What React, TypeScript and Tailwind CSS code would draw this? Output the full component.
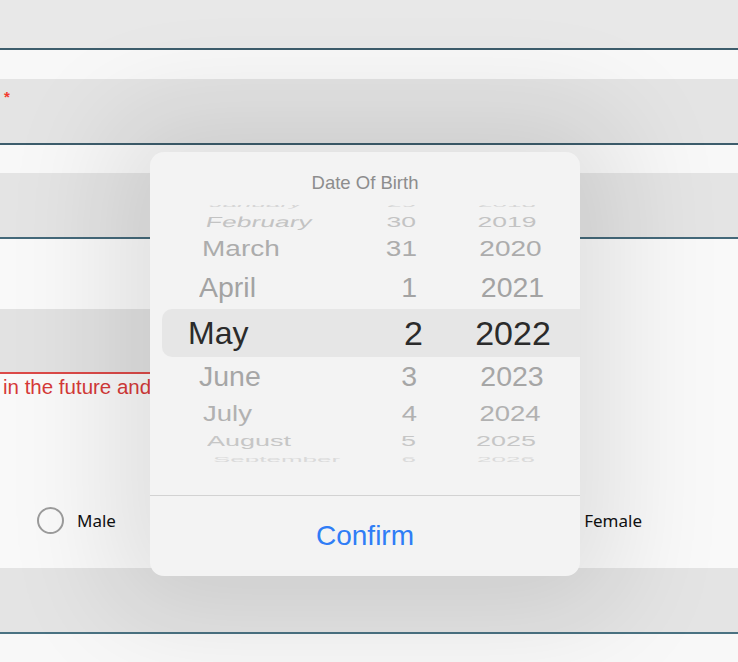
import React from "react";

type Row = {
  m: string;
  d: string;
  y: string;
  row: string;
  mc: string;
  dc: string;
  yc: string;
  t: string;
  mt?: string;
};

const rows: Row[] = [
  { m: "January", d: "29", y: "2018", row: "h-[9px]", mc: "w-[200px] pl-[60px]", dc: "w-[67px] pr-[1px]", yc: "w-[186px] pr-[6px]", t: "text-[26px] scale-y-[0.3] text-[#d6d6d6] -translate-y-[4px]", mt: "-skew-x-[10deg]" },
  { m: "February", d: "30", y: "2019", row: "h-[18px]", mc: "w-[200px] pl-[56px]", dc: "w-[67px] pr-[1px]", yc: "w-[186px] pr-[6px]", t: "text-[26.5px] scale-y-[0.55] text-[#c3c3c3]", mt: "-skew-x-[8deg]" },
  { m: "March", d: "31", y: "2020", row: "h-[36px]", mc: "w-[200px] pl-[52px]", dc: "w-[67px]", yc: "w-[186px] pl-[1px]", t: "text-[28px] scale-y-[0.8] text-[#acacac]" },
  { m: "April", d: "1", y: "2021", row: "h-[41px]", mc: "w-[200px] pl-[49px]", dc: "w-[67px]", yc: "w-[186px] pl-[5px]", t: "text-[28.5px] scale-y-[0.97] text-[#a3a3a3]" },
];

const rowsBelow: Row[] = [
  { m: "June", d: "3", y: "2023", row: "h-[41px]", mc: "w-[200px] pl-[49px]", dc: "w-[67px]", yc: "w-[186px] pl-[4px]", t: "text-[28.5px] scale-y-[0.96] text-[#a6a6a6]" },
  { m: "July", d: "4", y: "2024", row: "h-[34px]", mc: "w-[200px] pl-[53px]", dc: "w-[67px]", yc: "w-[186px]", t: "text-[27.5px] scale-y-[0.77] text-[#b1b1b1]" },
  { m: "August", d: "5", y: "2025", row: "h-[20px]", mc: "w-[200px] pl-[57px]", dc: "w-[67px] pr-[1px]", yc: "w-[186px] pr-[8px]", t: "text-[27px] scale-y-[0.55] text-[#c6c6c6]" },
  { m: "September", d: "6", y: "2026", row: "h-[10px]", mc: "w-[200px] pl-[63px]", dc: "w-[67px] pr-[1px]", yc: "w-[186px] pr-[8px]", t: "text-[26px] scale-y-[0.28] text-[#dadada] translate-y-[3px]" },
];

function WheelRow({ r }: { r: Row }) {
  return (
    <div className={`flex shrink-0 items-center ${r.row}`}>
      <div className={`shrink-0 ${r.mc}`}>
        <span className={`inline-block leading-none ${r.t} ${r.mt ?? ""}`}>{r.m}</span>
      </div>
      <div className={`shrink-0 text-right ${r.dc}`}>
        <span className={`inline-block leading-none ${r.t}`}>{r.d}</span>
      </div>
      <div className={`shrink-0 text-center ${r.yc}`}>
        <span className={`inline-block leading-none ${r.t}`}>{r.y}</span>
      </div>
    </div>
  );
}

export default function App() {
  return (
    <div className="relative h-[662px] w-[738px] overflow-hidden bg-[#f8f8f8] font-['Liberation_Sans',Arial,sans-serif]">
      {/* background form */}
      <div className="flex flex-col">
        <div className="h-[48px] bg-[#e8e8e8]" />
        <div className="h-[2px] bg-[#3d5d6c]" />
        <div className="h-[29px] bg-[#f8f8f8]" />
        <div className="h-[64px] bg-[#e4e4e4] pl-[4px] pt-[6px]">
          <span className="text-[15px] font-bold leading-none text-[#f23b30]">*</span>
        </div>
        <div className="h-[2px] bg-[#3d5d6c]" />
        <div className="h-[28px] bg-[#f8f8f8]" />
        <div className="h-[64px] bg-[#e4e4e4]" />
        <div className="h-[2px] bg-[#44697a]" />
        <div className="flex">
          <div className="flex w-[360px] flex-col">
            <div className="h-[70px] bg-[#f9f9f9]" />
            <div className="h-[63px] bg-[#e2e2e2]" />
            <div className="h-[2px] bg-[#dc4a48]" />
          </div>
          <div className="flex-1 bg-[#f9f9f9]" />
        </div>
        <div className="flex h-[194px] flex-col bg-[#f9f9f9]">
          <div className="whitespace-nowrap pl-[3px] pt-[1px] text-[20.5px] leading-[24px] text-[#d63a38]">
            in the future and
          </div>
          <div className="mt-[108px] flex items-center justify-between pl-[37px] pr-[96px] font-['Noto_Sans',sans-serif] text-[17px] text-[#111]">
            <div className="flex items-center gap-[13px]">
              <span className="h-[27px] w-[27px] rounded-full border-[2.5px] border-[#9c9c9c]" />
              <span>Male</span>
            </div>
            <div className="flex items-center gap-[13px]">
              <span className="h-[27px] w-[27px] rounded-full border-[2.5px] border-[#9c9c9c]" />
              <span>Female</span>
            </div>
          </div>
        </div>
        <div className="h-[64px] bg-[#e4e4e4]" />
        <div className="h-[2px] bg-[#4a7282]" />
        <div className="h-[28px] bg-[#f8f8f8]" />
      </div>

      {/* modal */}
      <div className="absolute left-[150px] top-[152px] flex h-[424px] w-[430px] flex-col overflow-hidden rounded-[14px] bg-[#f3f3f3] shadow-[0_0_110px_40px_rgba(0,0,0,0.1)]">
        <div className="h-[53px] shrink-0 pt-[20px] text-center text-[18.5px] leading-[22px] text-[#8d8d8d]">
          Date Of Birth
        </div>
        <div className="flex h-[257px] shrink-0 flex-col overflow-hidden">
          {rows.map((r) => (
            <WheelRow key={r.m} r={r} />
          ))}
          <div className="-mr-[12px] ml-[12px] flex h-[48px] shrink-0 items-center rounded-[10px] bg-[#e6e6e6] text-[#2b2b2b]">
            <div className="w-[188px] shrink-0 pl-[26px]">
              <span className="inline-block translate-y-[1px] text-[32px] leading-none">May</span>
            </div>
            <div className="w-[73px] shrink-0 text-right">
              <span className="inline-block translate-y-[1px] text-[34px] leading-none">2</span>
            </div>
            <div className="w-[180px] shrink-0 text-center">
              <span className="inline-block translate-y-[1px] text-[34px] leading-none">2022</span>
            </div>
          </div>
          {rowsBelow.map((r) => (
            <WheelRow key={r.m} r={r} />
          ))}
        </div>
        <div className="h-[33px] shrink-0" />
        <div className="h-px shrink-0 bg-[#d2d2d2]" />
        <div className="flex flex-1 items-center justify-center text-[28px] text-[#2f7df6]">
          Confirm
        </div>
      </div>
    </div>
  );
}
